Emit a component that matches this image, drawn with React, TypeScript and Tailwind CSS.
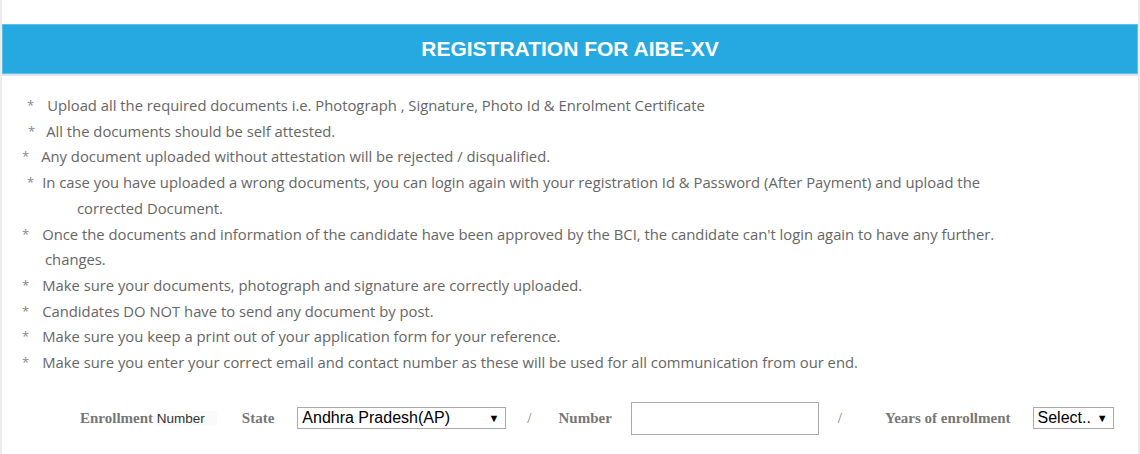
import React from 'react'

const notes: { star: string; text: string; pl: string; cont?: string; contPl?: string }[] = [
  { star: 'ml-[25px]', pl: 'pl-[13px]', text: 'Upload all the required documents i.e. Photograph , Signature, Photo Id & Enrolment Certificate' },
  { star: 'ml-[26px]', pl: 'pl-[11px]', text: 'All the documents should be self attested.' },
  { star: 'ml-[20px]', pl: 'pl-[12px]', text: 'Any document uploaded without attestation will be rejected / disqualified.' },
  {
    star: 'ml-[25px]',
    pl: 'pl-[8px]',
    text: 'In case you have uploaded a wrong documents, you can login again with your registration Id & Password (After Payment) and upload the',
    cont: 'corrected Document.',
    contPl: 'pl-[75px]',
  },
  {
    star: 'ml-[20px]',
    pl: 'pl-[13px]',
    text: "Once the documents and information of the candidate have been approved by the BCI, the candidate can't login again to have any further.",
    cont: 'changes.',
    contPl: 'pl-[43px]',
  },
  { star: 'ml-[20px]', pl: 'pl-[13px]', text: 'Make sure your documents, photograph and signature are correctly uploaded.' },
  { star: 'ml-[20px]', pl: 'pl-[13px]', text: 'Candidates DO NOT have to send any document by post.' },
  { star: 'ml-[20px]', pl: 'pl-[13px]', text: 'Make sure you keep a print out of your application form for your reference.' },
  { star: 'ml-[20px]', pl: 'pl-[13px]', text: 'Make sure you enter your correct email and contact number as these will be used for all communication from our end.' },
]

function Caret() {
  return <span className="text-[11px] leading-none text-black">▼</span>
}

export default function App() {
  return (
    <div className="h-[454px] w-[1140px] overflow-hidden border-x-2 border-[#ececec] bg-white">
      <div className="h-6" />
      <div className="flex h-[50px] w-[1136px] items-center justify-center border border-[#5cc0ea] bg-[#25a9e0]">
        <h1 className="font-['Liberation_Sans',Arial,sans-serif] text-[21px] font-bold text-white">REGISTRATION FOR AIBE-XV</h1>
      </div>
      <div className="h-[2px] w-[1136px] bg-[#dfe3e8]" />

      <div className="pt-[17px] font-['Open_Sans',sans-serif] text-[14.8px] leading-[25.7px] text-[#666]">
        {notes.map((n) => (
          <div key={n.text}>
            <div className="flex">
              <span className={`${n.star} text-[13px] text-[#888]`}>*</span>
              <span className={n.pl}>{n.text}</span>
            </div>
            {n.cont && <div className={n.contPl}>{n.cont}</div>}
          </div>
        ))}
      </div>

      <div className="mt-[26px] flex items-center font-['Liberation_Serif','Times_New_Roman',serif] text-[15px] font-bold text-[#777]">
        <span className="ml-[78px]">
          Enrollment{' '}
          <span className="bg-[#fafafa] pr-[12px] font-['Liberation_Sans',Arial,sans-serif] text-[13.5px] font-normal text-[#333]">Number</span>
        </span>
        <span className="ml-[25px]">State</span>
        <div className="ml-[23px] flex h-[22px] w-[209px] items-center justify-between border border-[#a9a9a9] bg-white pl-[4px] pr-[6px] font-['Liberation_Sans',Arial,sans-serif] text-[16px] font-normal text-black">
          <span>Andhra Pradesh(AP)</span>
          <Caret />
        </div>
        <span className="ml-[21px] font-normal">/</span>
        <span className="ml-[27px]">Number</span>
        <div className="ml-[19px] h-[33px] w-[188px] border border-[#a9a9a9] bg-white" />
        <span className="ml-[19px] font-normal">/</span>
        <span className="ml-[43px]">Years of enrollment</span>
        <div className="ml-[22px] flex h-[22px] w-[81px] items-center justify-between border border-[#a9a9a9] bg-white pl-[4px] pr-[5px] font-['Liberation_Sans',Arial,sans-serif] text-[16px] font-normal text-black">
          <span>Select..</span>
          <Caret />
        </div>
      </div>
    </div>
  )
}
